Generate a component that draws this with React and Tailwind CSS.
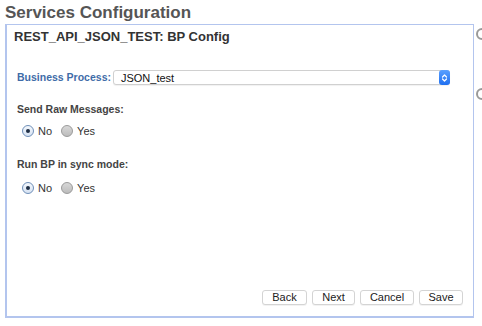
const Radio = ({ checked }) =>
  checked ? (
    <span className="block w-[12px] h-[12px] rounded-full border border-[#6f8fb8] bg-gradient-to-b from-[#f4f8fd] to-[#d6e2f2] flex items-center justify-center">
      <span className="block w-[4px] h-[4px] rounded-full bg-[#1f2f45]" />
    </span>
  ) : (
    <span className="block w-[12px] h-[12px] rounded-full border border-[#9a9a9a] bg-gradient-to-b from-[#d8d8d8] to-[#bcbcbc]" />
  );

const RadioGroup = () => (
  <div className="flex items-center pl-[15px] text-[11px] text-[#333]">
    <Radio checked />
    <span className="ml-[4px]">No</span>
    <span className="ml-[9px]">
      <Radio />
    </span>
    <span className="ml-[4px]">Yes</span>
  </div>
);

const Button = ({ label, w }) => (
  <button className={`${w} h-[15px] bg-white border border-[#d4d4d4] rounded-[3px] text-[11px] leading-none text-[#222] shadow-[0_1px_0_rgba(0,0,0,0.05)]`}>
    {label}
  </button>
);

export default function App() {
  return (
    <div
      className="w-[482px] h-[326px] overflow-hidden bg-white relative"
      style={{ fontFamily: '"Liberation Sans", Arial, sans-serif' }}
    >
      <h1 className="pl-[5px] pt-[2px] text-[17px] leading-[21px] font-bold text-[#555]">Services Configuration</h1>
      <div className="ml-[5px] mt-[1px] w-[469px] h-[294px] border border-[#b3c5ee] border-l-2 border-b-2 flex flex-col">
        <div className="pl-[7px] pt-[4px] text-[13px] leading-[15px] font-bold text-[#333]">REST_API_JSON_TEST: BP Config</div>

        <div className="flex items-center mt-[26px] pl-[10px]">
          <span className="text-[10.5px] font-bold text-[#3f6ca8]">Business Process:</span>
          <div className="ml-[2px] w-[337px] h-[15px] border border-[#d0d0d0] rounded-[3px] bg-white flex items-center justify-between shadow-[0_1px_1px_rgba(0,0,0,0.06)]">
            <span className="pl-[7px] text-[11px] text-[#111]">JSON_test</span>
            <span className="w-[11px] h-[15px] -mr-px rounded-[3px] bg-gradient-to-b from-[#5aa0ff] to-[#1e6ff0] flex items-center justify-center">
              <svg width="7" height="10" viewBox="0 0 7 10" fill="none" stroke="white" strokeWidth="1.2" strokeLinecap="round" strokeLinejoin="round">
                <path d="M1.5 4L3.5 2L5.5 4" />
                <path d="M1.5 6L3.5 8L5.5 6" />
              </svg>
            </span>
          </div>
        </div>

        <div className="pl-[10px] mt-[16px] text-[10.5px] font-bold text-[#444]">Send Raw Messages:</div>
        <div className="mt-[5px]">
          <RadioGroup />
        </div>

        <div className="pl-[10px] mt-[18px] text-[10.5px] font-bold text-[#444]">Run BP in sync mode:</div>
        <div className="mt-[7px]">
          <RadioGroup />
        </div>

        <div className="mt-auto mb-[11px] flex justify-end gap-[5px] pr-[10px]">
          <Button label="Back" w="w-[45px]" />
          <Button label="Next" w="w-[43px]" />
          <Button label="Cancel" w="w-[54px]" />
          <Button label="Save" w="w-[44px]" />
        </div>
      </div>
      <span className="absolute left-[476px] top-[28px] w-[12px] h-[12px] rounded-full border-2 border-[#9a9a9a]" />
      <span className="absolute left-[476px] top-[88px] w-[12px] h-[12px] rounded-full border-2 border-[#9a9a9a]" />
    </div>
  );
}
